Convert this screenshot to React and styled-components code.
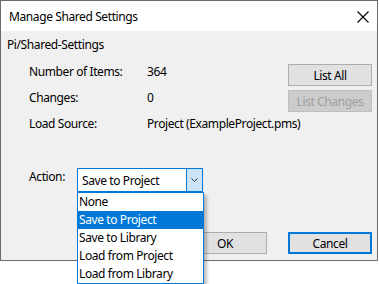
import React from 'react';
import styled, {createGlobalStyle} from 'styled-components';

const actions = ['None', 'Save to Project', 'Save to Library', 'Load from Project', 'Load from Library'];

function App() {
    const selected = 'Save to Project';

    return (
        <Page>
            <GlobalStyle/>
            <Window>
                <TitleBar>
                    <Title>Manage Shared Settings</Title>
                    <CloseIcon width="12" height="12" viewBox="0 0 12 12">
                        <path d="M0.5 0.5 L11.5 11.5 M11.5 0.5 L0.5 11.5" stroke="#000" strokeWidth="1.1"/>
                    </CloseIcon>
                </TitleBar>
                <Body>
                    <SectionTitle>Pi/Shared-Settings</SectionTitle>
                    <InfoSection>
                        <InfoGrid>
                            <span>Number of Items:</span>
                            <span>364</span>
                            <span>Changes:</span>
                            <span>0</span>
                            <span>Load Source:</span>
                            <span>Project (ExampleProject.pms)</span>
                        </InfoGrid>
                        <SideButtons>
                            <Button>List All</Button>
                            <Button disabled>List Changes</Button>
                        </SideButtons>
                    </InfoSection>
                    <ActionRow>
                        <ActionLabel>Action:</ActionLabel>
                        <Combo>
                            <ComboText>{selected}</ComboText>
                            <ComboArrow>
                                <svg width="7" height="4" viewBox="0 0 7 4">
                                    <path d="M0.5 0.5 L3.5 3.5 L6.5 0.5" fill="none" stroke="#333" strokeWidth="1"/>
                                </svg>
                            </ComboArrow>
                            <DropList>
                                {actions.map(a => (
                                    <DropItem key={a} $active={a === selected}>{a}</DropItem>
                                ))}
                            </DropList>
                        </Combo>
                    </ActionRow>
                    <Footer>
                        <Button>OK</Button>
                        <Button $focused>Cancel</Button>
                    </Footer>
                </Body>
            </Window>
        </Page>
    );
}

export default App;

const GlobalStyle = createGlobalStyle`
    html, body {
        margin: 0;
        background: #ffffff;
        font-family: 'Noto Sans', 'Open Sans', sans-serif;
        font-size: 12px;
        letter-spacing: -0.4px;
        color: #000;
    }
`

const Page = styled.div`
    height: 284px;
    overflow: hidden;
`

const Window = styled.div`
    width: 378px;
    height: 261px;
    box-sizing: border-box;
    border: 1px solid #6b6b6b;
    background: #f0f0f0;
    display: flex;
    flex-flow: column;
`

const TitleBar = styled.div`
    height: 30px;
    flex-shrink: 0;
    background: #ffffff;
    display: flex;
    align-items: center;
    justify-content: space-between;
    padding: 0 8px 0 8px;
`

const Title = styled.span`
    margin-top: 1px;
`

const CloseIcon = styled.svg`
    margin-top: 1px;
`

const Body = styled.div`
    flex: 1;
    display: flex;
    flex-flow: column;
    padding: 0 5px 0 6px;
`

const SectionTitle = styled.div`
    margin-top: 6px;
    line-height: 16px;
`

const InfoSection = styled.div`
    display: flex;
    align-items: flex-start;
    padding-left: 22px;
`

const InfoGrid = styled.div`
    flex: 1;
    min-width: 0;
    margin-top: 5px;
    display: grid;
    grid-template-columns: 118px max-content;
    grid-auto-rows: 26px;
    align-items: center;
    white-space: nowrap;
`

const SideButtons = styled.div`
    flex-shrink: 0;
    margin-top: 11px;
    display: flex;
    flex-flow: column;
    gap: 4px;
`

const Button = styled.button`
    width: 84px;
    height: 22px;
    box-sizing: border-box;
    border: ${p => p.$focused ? '2px solid #0078d7' : '1px solid #adadad'};
    background: #e1e1e1;
    font-family: 'Noto Sans', 'Open Sans', sans-serif;
    font-size: 12px;
    letter-spacing: -0.4px;
    color: #000;
    padding: 0;
    &:disabled {
        color: #a0a0a0;
        background: #cccccc;
        border-color: #bfbfbf;
    }
`

const ActionRow = styled.div`
    margin-top: 32px;
    display: flex;
    align-items: flex-start;
    padding-left: 22px;
`

const ActionLabel = styled.span`
    width: 48px;
    line-height: 18px;
`

const Combo = styled.div`
    position: relative;
    width: 126px;
    height: 24px;
    box-sizing: border-box;
    border: 1px solid #0078d7;
    background: #ffffff;
    display: flex;
    align-items: center;
`

const ComboText = styled.span`
    flex: 1;
    padding-left: 4px;
`

const ComboArrow = styled.div`
    width: 16px;
    height: 100%;
    box-sizing: border-box;
    border-left: 1px solid #0078d7;
    background: #cce4f7;
    display: flex;
    align-items: center;
    justify-content: center;
`

const DropList = styled.div`
    position: absolute;
    top: 23px;
    left: -1px;
    width: 127px;
    box-sizing: border-box;
    border: 1px solid #0078d7;
    background: #ffffff;
    box-shadow: 3px 3px 3px rgba(0, 0, 0, 0.25);
    z-index: 2;
`

const DropItem = styled.div`
    height: 18px;
    line-height: 18px;
    padding-left: 1px;
    white-space: nowrap;
    background: ${p => p.$active ? '#0078d7' : 'transparent'};
    color: ${p => p.$active ? '#ffffff' : '#000000'};
`

const Footer = styled.div`
    margin-top: 40px;
    display: flex;
    justify-content: flex-end;
    gap: 21px;
`
